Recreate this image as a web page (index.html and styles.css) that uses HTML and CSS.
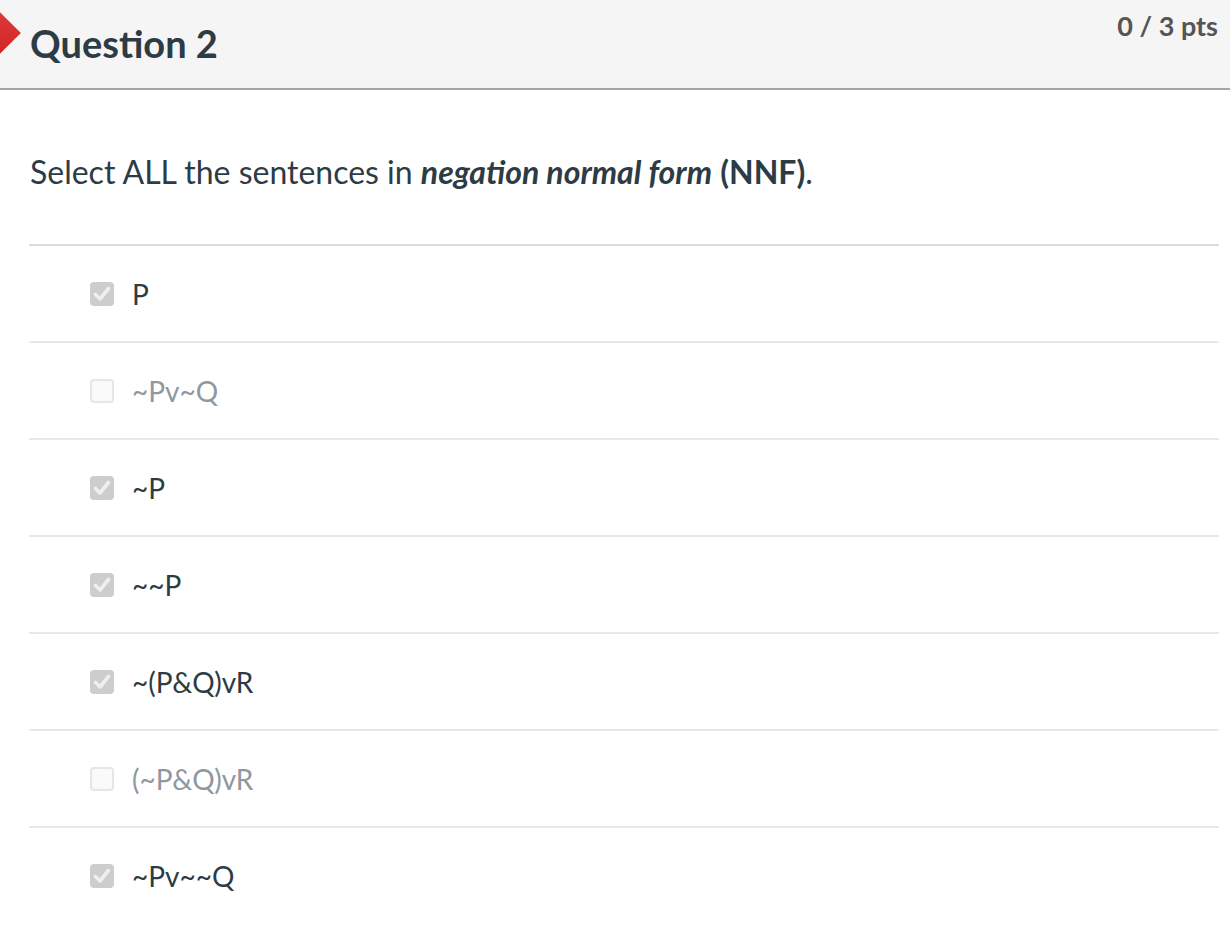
FILE: index.html
```html
<!DOCTYPE html>
<html>
<head>
<meta charset="utf-8">
<link rel="stylesheet" href="styles.css">
</head>
<body>
<div class="question">
  <div class="header">
    <span class="flag"></span>
    <h2 class="title">Question 2</h2>
    <div class="pts">0 / 3 pts</div>
  </div>
  <div class="body">
    <p class="prompt">Select ALL the sentences in <strong><em>negation normal form</em></strong> <strong>(NNF)</strong>.</p>
    <div class="answers">
      <div class="answer"><span class="box checked"><svg viewBox="0 0 24 24" width="24" height="24"><path d="M5.5 12.5 L10 17 L18.5 6.5" fill="none" stroke="#efefef" stroke-width="3.6" stroke-linecap="round" stroke-linejoin="round"/></svg></span><span class="label">P</span></div>
      <div class="answer"><span class="box"></span><span class="label muted">~Pv~Q</span></div>
      <div class="answer"><span class="box checked"><svg viewBox="0 0 24 24" width="24" height="24"><path d="M5.5 12.5 L10 17 L18.5 6.5" fill="none" stroke="#efefef" stroke-width="3.6" stroke-linecap="round" stroke-linejoin="round"/></svg></span><span class="label">~P</span></div>
      <div class="answer"><span class="box checked"><svg viewBox="0 0 24 24" width="24" height="24"><path d="M5.5 12.5 L10 17 L18.5 6.5" fill="none" stroke="#efefef" stroke-width="3.6" stroke-linecap="round" stroke-linejoin="round"/></svg></span><span class="label">~~P</span></div>
      <div class="answer"><span class="box checked"><svg viewBox="0 0 24 24" width="24" height="24"><path d="M5.5 12.5 L10 17 L18.5 6.5" fill="none" stroke="#efefef" stroke-width="3.6" stroke-linecap="round" stroke-linejoin="round"/></svg></span><span class="label">~(P&amp;Q)vR</span></div>
      <div class="answer"><span class="box"></span><span class="label muted">(~P&amp;Q)vR</span></div>
      <div class="answer"><span class="box checked"><svg viewBox="0 0 24 24" width="24" height="24"><path d="M5.5 12.5 L10 17 L18.5 6.5" fill="none" stroke="#efefef" stroke-width="3.6" stroke-linecap="round" stroke-linejoin="round"/></svg></span><span class="label">~Pv~~Q</span></div>
    </div>
  </div>
</div>
</body>
</html>
```
FILE: styles.css
```css
html, body {
  margin: 0;
  padding: 0;
  background: #ffffff;
  font-family: Lato, "Open Sans", "Liberation Sans", sans-serif;
  color: #2d3b45;
}
.question {
  width: 1230px;
  overflow: hidden;
}
.header {
  position: relative;
  height: 88px;
  background: #f5f5f5;
  border-bottom: 2px solid #a5a5a5;
  display: flex;
  align-items: flex-start;
  justify-content: space-between;
  padding: 0 12px 0 30px;
}
.flag {
  position: absolute;
  left: -25px;
  top: 14px;
  width: 38px;
  height: 38px;
  background: linear-gradient(135deg, #e33b3b, #c92424);
  transform: rotate(45deg);
}
.title {
  margin: 0;
  padding-top: 20px;
  font-size: 38px;
  font-weight: 700;
  line-height: 46px;
  color: #2d3b45;
}
.pts {
  padding-top: 10px;
  font-size: 27px;
  font-weight: 700;
  line-height: 32px;
  color: #555555;
}
.body {
  padding: 0 11px 0 29px;
}
.prompt {
  margin: 0;
  padding-top: 62px;
  padding-bottom: 52px;
  font-size: 32px;
  line-height: 40px;
  padding-left: 1px;
}
.prompt strong {
  font-weight: 700;
}
.answers {
  border-top: 2px solid #dcdcdc;
}
.answer {
  height: 95px;
  border-bottom: 2px solid #e8e8e8;
  display: flex;
  align-items: center;
  padding-left: 61px;
}
.answer:last-child {
  border-bottom: none;
}
.box {
  width: 24px;
  height: 24px;
  box-sizing: border-box;
  border-radius: 4px;
  border: 2px solid #e6e6e6;
  background: #fafafa;
  display: flex;
  align-items: center;
  justify-content: center;
  margin-right: 18px;
}
.box.checked {
  border: none;
  background: #cdcdcd;
}
.label {
  font-size: 28px;
  line-height: 32px;
  color: #2d3b45;
}
.label.muted {
  color: #8f989f;
}
```
